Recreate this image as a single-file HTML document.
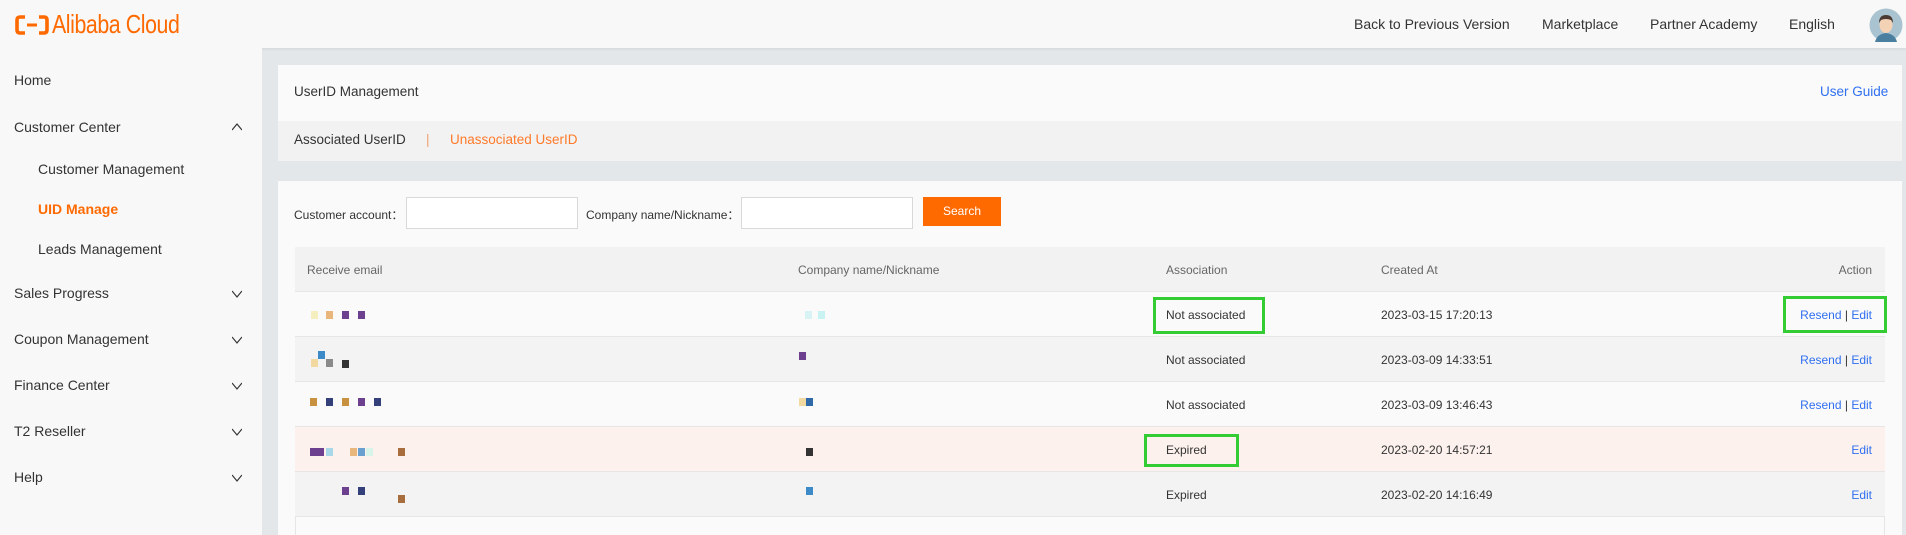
<!DOCTYPE html>
<html><head><meta charset="utf-8">
<style>
*{margin:0;padding:0;box-sizing:border-box}
body{width:1906px;height:535px;overflow:hidden;background:#e4e7ea;font-family:"Liberation Sans",Arial,sans-serif;color:#333;position:relative}
.abs{position:absolute}
#hdr{left:0;top:0;width:1906px;height:48px;background:#f8f8f8;box-shadow:0 1px 3px rgba(0,0,0,.08)}
.nav{top:16px;font-size:14px;color:#333;white-space:nowrap}
#side{left:0;top:48px;width:262px;height:487px;background:#f8f8f8}
.mi{font-size:14px;color:#333;white-space:nowrap}
.chev{position:absolute;left:232px;width:10px;height:10px}
.card{background:#fafafa}
.tbl{font-size:12px;white-space:nowrap}
.row{position:absolute;left:295px;width:1590px;height:45px;border-bottom:1px solid #e6e6e6}
.blue{color:#2f6ff0}
.g{position:absolute;border:3px solid #33cc33}
.px{position:absolute;width:7px;height:8px}
</style></head><body>
<div id="hdr" class="abs">
  <svg class="abs" style="left:15px;top:15px" width="34" height="20" viewBox="0 0 34 20">
    <path d="M10 2H5Q2 2 2 5V15Q2 18 5 18H10" fill="none" stroke="#ff6a00" stroke-width="3.6"/>
    <path d="M24 2H29Q32 2 32 5V15Q32 18 29 18H24" fill="none" stroke="#ff6a00" stroke-width="3.6"/>
    <rect x="12" y="8.5" width="10" height="3" fill="#ff6a00"/>
  </svg>
  <div class="abs" style="left:52px;top:9px;font-size:26px;color:#ff6a00;transform:scaleX(.82);transform-origin:0 0;white-space:nowrap;letter-spacing:-.5px">Alibaba Cloud</div>
  <div class="abs nav" style="left:1354px">Back to Previous Version</div>
  <div class="abs nav" style="left:1542px">Marketplace</div>
  <div class="abs nav" style="left:1650px">Partner Academy</div>
  <div class="abs nav" style="left:1789px">English</div>
  <svg class="abs" style="left:1869px;top:8px" width="34" height="34" viewBox="0 0 34 34">
    <circle cx="17" cy="17" r="16.5" fill="#a9c3d0"/>
    <path d="M6 34Q8 26 17 25Q26 26 28 34Z" fill="#4a7fa0"/>
    <ellipse cx="17" cy="17" rx="6.5" ry="8" fill="#f3d2b5"/>
    <path d="M10 15Q10 7 17 7Q24 7 24 15L22 12Q17 10 12 12Z" fill="#4a3a33"/>
  </svg>
</div>

<div id="side" class="abs">
  <div class="abs mi" style="left:14px;top:24px">Home</div>
  <div class="abs mi" style="left:14px;top:71px">Customer Center</div>
  <svg class="chev" style="top:74px" viewBox="0 0 10 10"><path d="M0 8L5 2L10 8" fill="none" stroke="#333" stroke-width="1.2"/></svg>
  <div class="abs mi" style="left:38px;top:113px">Customer Management</div>
  <div class="abs mi" style="left:38px;top:153px;color:#ff6a00;font-weight:bold">UID Manage</div>
  <div class="abs mi" style="left:38px;top:193px">Leads Management</div>
  <div class="abs mi" style="left:14px;top:237px">Sales Progress</div>
  <div class="abs mi" style="left:14px;top:283px">Coupon Management</div>
  <div class="abs mi" style="left:14px;top:329px">Finance Center</div>
  <div class="abs mi" style="left:14px;top:375px">T2 Reseller</div>
  <div class="abs mi" style="left:14px;top:421px">Help</div>
  <svg class="chev" style="top:241px" viewBox="0 0 10 10"><path d="M0 2L5 8L10 2" fill="none" stroke="#333" stroke-width="1.2"/></svg>
  <svg class="chev" style="top:287px" viewBox="0 0 10 10"><path d="M0 2L5 8L10 2" fill="none" stroke="#333" stroke-width="1.2"/></svg>
  <svg class="chev" style="top:333px" viewBox="0 0 10 10"><path d="M0 2L5 8L10 2" fill="none" stroke="#333" stroke-width="1.2"/></svg>
  <svg class="chev" style="top:379px" viewBox="0 0 10 10"><path d="M0 2L5 8L10 2" fill="none" stroke="#333" stroke-width="1.2"/></svg>
  <svg class="chev" style="top:425px" viewBox="0 0 10 10"><path d="M0 2L5 8L10 2" fill="none" stroke="#333" stroke-width="1.2"/></svg>
</div>

<div class="abs card" style="left:278px;top:65px;width:1624px;height:96px"></div>
<div class="abs" style="left:278px;top:121px;width:1624px;height:40px;background:#f2f2f2"></div>
<div class="abs" style="left:294px;top:84px;font-size:13.5px;white-space:nowrap">UserID Management</div>
<div class="abs blue" style="left:1820px;top:84px;font-size:13.5px;white-space:nowrap;width:66px;text-align:right">User Guide</div>
<div class="abs" style="left:294px;top:132px;font-size:13.5px;white-space:nowrap">Associated UserID</div>
<div class="abs" style="left:426px;top:132px;font-size:13.5px;color:#f0a070">|</div>
<div class="abs" style="left:450px;top:132px;font-size:13.5px;color:#ff7a2a;white-space:nowrap">Unassociated UserID</div>

<div class="abs card" style="left:278px;top:181px;width:1624px;height:354px"></div>
<div class="abs tbl" style="left:294px;top:206px">Customer account：</div>
<div class="abs" style="left:406px;top:197px;width:172px;height:32px;background:#fff;border:1px solid #d9d9d9"></div>
<div class="abs tbl" style="left:586px;top:206px">Company name/Nickname：</div>
<div class="abs" style="left:741px;top:197px;width:172px;height:32px;background:#fff;border:1px solid #d9d9d9"></div>
<div class="abs" style="left:923px;top:197px;width:78px;height:29px;background:#ff6a00;color:#fff;font-size:12px;text-align:center;line-height:29px">Search</div>

<div class="abs" style="left:295px;top:247px;width:1590px;height:288px;border:1px solid #e6e6e6;border-bottom:none"></div>
<div class="row tbl" style="top:247px;background:#f2f2f2;color:#666">
  <span class="abs" style="left:12px;top:16px">Receive email</span>
  <span class="abs" style="left:503px;top:16px">Company name/Nickname</span>
  <span class="abs" style="left:871px;top:16px">Association</span>
  <span class="abs" style="left:1086px;top:16px">Created At</span>
  <span class="abs" style="right:13px;top:16px">Action</span>
</div>
<div class="row tbl" style="top:292px;background:#fafafa">
  <span class="abs" style="left:871px;top:16px">Not associated</span>
  <span class="abs" style="left:1086px;top:16px">2023-03-15 17:20:13</span>
  <span class="abs blue" style="right:13px;top:16px">Resend <span style="color:#333">|</span> Edit</span>
</div>
<div class="row tbl" style="top:337px;background:#f3f3f3">
  <span class="abs" style="left:871px;top:16px">Not associated</span>
  <span class="abs" style="left:1086px;top:16px">2023-03-09 14:33:51</span>
  <span class="abs blue" style="right:13px;top:16px">Resend <span style="color:#333">|</span> Edit</span>
</div>
<div class="row tbl" style="top:382px;background:#fafafa">
  <span class="abs" style="left:871px;top:16px">Not associated</span>
  <span class="abs" style="left:1086px;top:16px">2023-03-09 13:46:43</span>
  <span class="abs blue" style="right:13px;top:16px">Resend <span style="color:#333">|</span> Edit</span>
</div>
<div class="row tbl" style="top:427px;background:#fcf1ec">
  <span class="abs" style="left:871px;top:16px">Expired</span>
  <span class="abs" style="left:1086px;top:16px">2023-02-20 14:57:21</span>
  <span class="abs blue" style="right:13px;top:16px">Edit</span>
</div>
<div class="row tbl" style="top:472px;background:#f3f3f3">
  <span class="abs" style="left:871px;top:16px">Expired</span>
  <span class="abs" style="left:1086px;top:16px">2023-02-20 14:16:49</span>
  <span class="abs blue" style="right:13px;top:16px">Edit</span>
</div>

<!-- pixelated blurs -->
<div class="px" style="left:311px;top:311px;background:#f5efc0"></div>
<div class="px" style="left:326px;top:311px;background:#e9b77c"></div>
<div class="px" style="left:342px;top:311px;background:#6c3f8f"></div>
<div class="px" style="left:358px;top:311px;background:#6c3f8f"></div>
<div class="px" style="left:805px;top:311px;background:#d8f3f3"></div>
<div class="px" style="left:818px;top:311px;background:#c9f3f3"></div>
<div class="px" style="left:318px;top:351px;background:#3d8ac9"></div>
<div class="px" style="left:311px;top:359px;background:#f1d9a0"></div>
<div class="px" style="left:326px;top:359px;background:#8a8a8a"></div>
<div class="px" style="left:342px;top:360px;background:#333"></div>
<div class="px" style="left:799px;top:352px;background:#6c3f8f"></div>
<div class="px" style="left:310px;top:398px;background:#c8913f"></div>
<div class="px" style="left:326px;top:398px;background:#33407a"></div>
<div class="px" style="left:342px;top:398px;background:#c8913f"></div>
<div class="px" style="left:358px;top:398px;background:#6c3f8f"></div>
<div class="px" style="left:374px;top:398px;background:#33407a"></div>
<div class="px" style="left:799px;top:398px;background:#f1d9a0"></div>
<div class="px" style="left:806px;top:398px;background:#3069a8"></div>
<div class="px" style="left:310px;top:448px;width:14px;background:#6c3f8f"></div>
<div class="px" style="left:326px;top:448px;background:#a8d8e8"></div>
<div class="px" style="left:350px;top:448px;background:#e9b77c"></div>
<div class="px" style="left:358px;top:448px;background:#6aa0d0"></div>
<div class="px" style="left:366px;top:448px;background:#d8f3e8"></div>
<div class="px" style="left:398px;top:448px;background:#a86d3c"></div>
<div class="px" style="left:806px;top:448px;background:#333"></div>
<div class="px" style="left:342px;top:487px;background:#6c3f8f"></div>
<div class="px" style="left:358px;top:487px;background:#33407a"></div>
<div class="px" style="left:398px;top:495px;background:#a86d3c"></div>
<div class="px" style="left:806px;top:487px;background:#3d8ac9"></div>

<div class="g" style="left:1153px;top:297px;width:112px;height:37px"></div>
<div class="g" style="left:1783px;top:296px;width:104px;height:37px"></div>
<div class="g" style="left:1144px;top:434px;width:95px;height:33px"></div>
</body></html>
